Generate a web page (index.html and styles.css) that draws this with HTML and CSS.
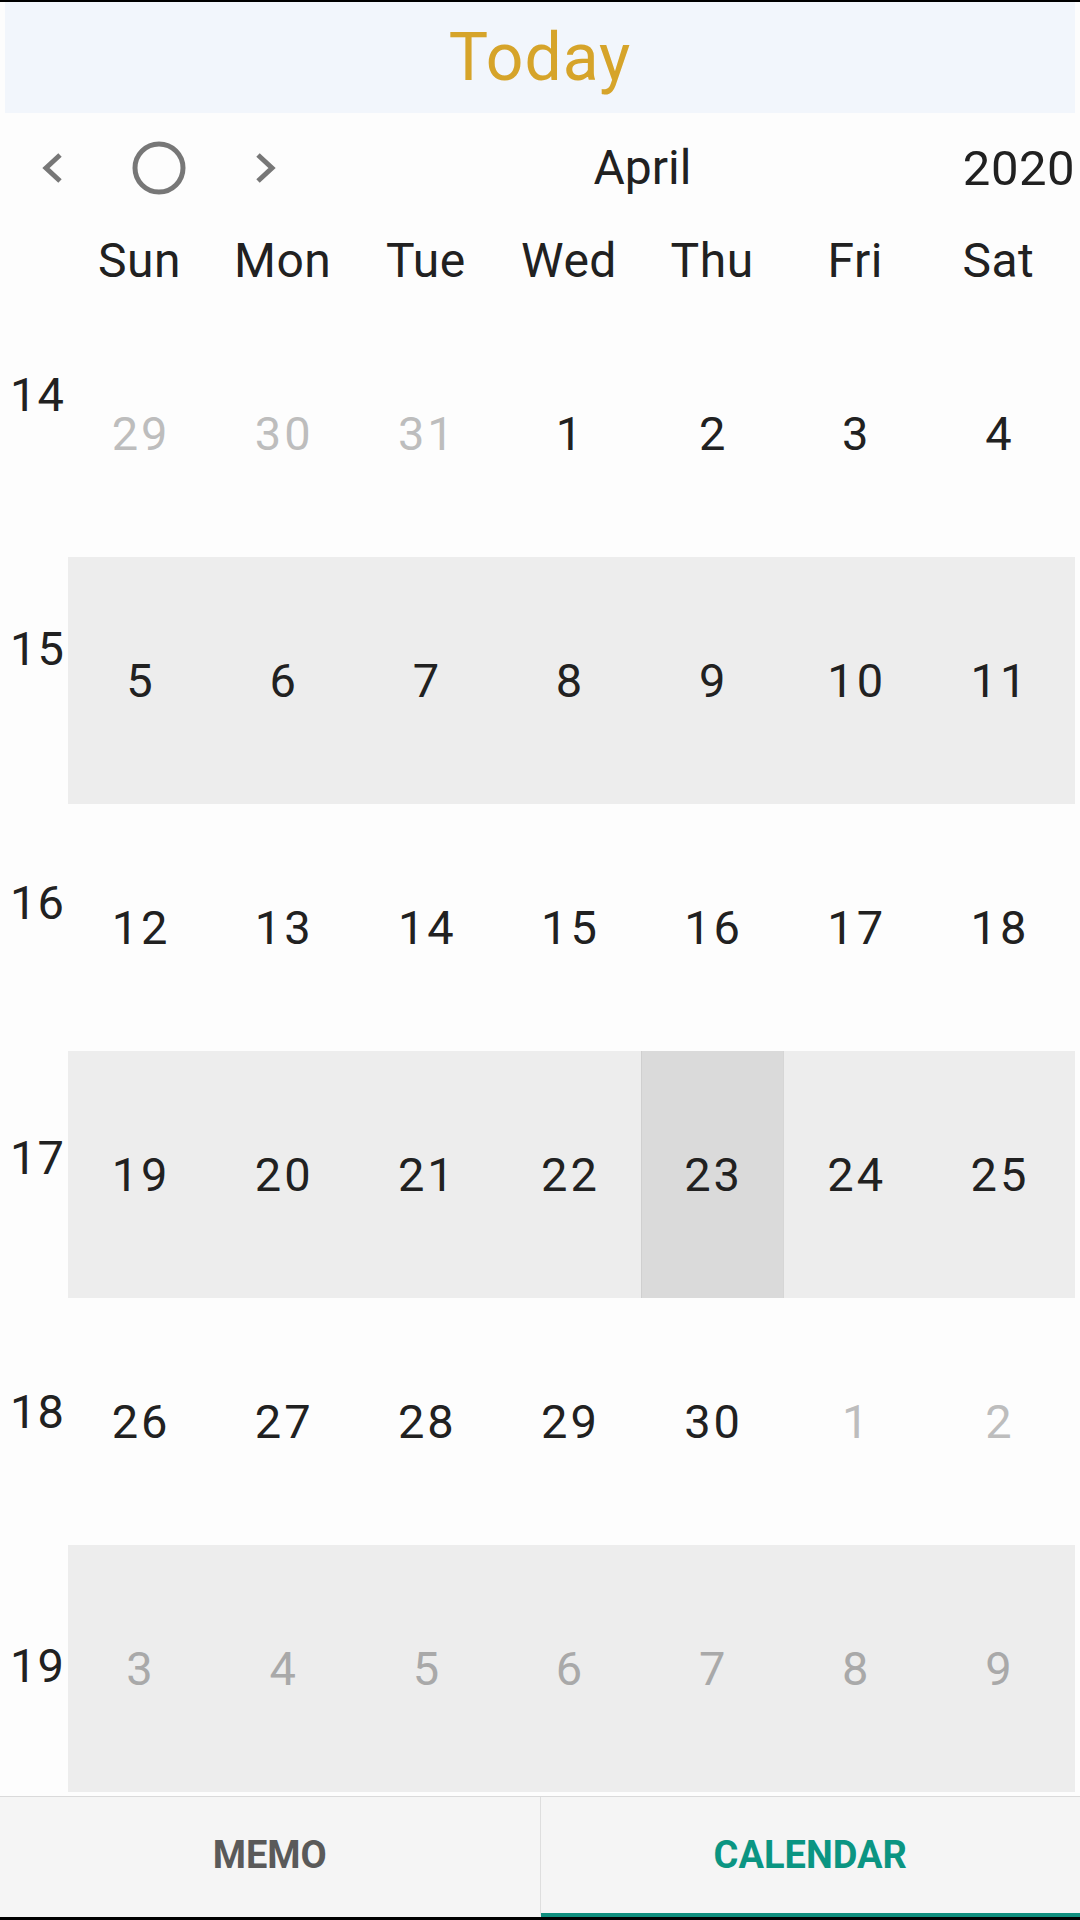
FILE: index.html
```html
<!DOCTYPE html>
<html lang="en">
<head>
<meta charset="utf-8">
<title>Calendar</title>
<link rel="stylesheet" href="styles.css">
</head>
<body>
<div class="screen">
  <header class="title-bar"><h1 class="title">Today</h1></header>
  <div class="nav">
    <div class="nav-icons">
      <svg class="chev" width="24" height="32" viewBox="0 0 24 32"><path d="M19 3 L5 16 L19 29" fill="none" stroke="#777" stroke-width="5"/></svg>
      <svg class="ring" width="56" height="56" viewBox="0 0 56 56"><circle cx="28" cy="28" r="24" fill="none" stroke="#777" stroke-width="5"/></svg>
      <svg class="chev" width="24" height="32" viewBox="0 0 24 32"><path d="M5 3 L19 16 L5 29" fill="none" stroke="#777" stroke-width="5"/></svg>
    </div>
    <div class="month">April</div>
    <div class="year">2020</div>
  </div>
  <div class="weekdays">
    <span class="wk-spacer"></span>
    <div class="wd-grid">
      <span class="wd">Sun</span><span class="wd">Mon</span><span class="wd">Tue</span><span class="wd">Wed</span><span class="wd">Thu</span><span class="wd">Fri</span><span class="wd">Sat</span>
    </div>
  </div>
  <div class="weeks">
    <div class="week-nums">
      <div class="week-num">14</div>
      <div class="week-num">15</div>
      <div class="week-num">16</div>
      <div class="week-num">17</div>
      <div class="week-num">18</div>
      <div class="week-num">19</div>
    </div>
    <div class="rows">
      <div class="week">
        <div class="day other">29</div><div class="day other">30</div><div class="day other">31</div><div class="day">1</div><div class="day">2</div><div class="day">3</div><div class="day">4</div>
      </div>
      <div class="week shaded">
        <div class="day">5</div><div class="day">6</div><div class="day">7</div><div class="day">8</div><div class="day">9</div><div class="day">10</div><div class="day">11</div>
      </div>
      <div class="week">
        <div class="day">12</div><div class="day">13</div><div class="day">14</div><div class="day">15</div><div class="day">16</div><div class="day">17</div><div class="day">18</div>
      </div>
      <div class="week shaded">
        <div class="day">19</div><div class="day">20</div><div class="day">21</div><div class="day">22</div><div class="day today">23</div><div class="day">24</div><div class="day">25</div>
      </div>
      <div class="week">
        <div class="day">26</div><div class="day">27</div><div class="day">28</div><div class="day">29</div><div class="day">30</div><div class="day other">1</div><div class="day other">2</div>
      </div>
      <div class="week shaded">
        <div class="day other">3</div><div class="day other">4</div><div class="day other">5</div><div class="day other">6</div><div class="day other">7</div><div class="day other">8</div><div class="day other">9</div>
      </div>
    </div>
  </div>
  <nav class="tabs">
    <div class="tab">MEMO</div>
    <div class="tab active">CALENDAR</div>
  </nav>
  <div class="bottom-edge"></div>
</div>
</body>
</html>
```

FILE: styles.css
```css
* { box-sizing: border-box; }
html, body { margin: 0; padding: 0; }
body {
  background: #fdfdfd;
  font-family: Roboto, "Noto Sans", "Liberation Sans", sans-serif;
  color: #212121;
}
.screen {
  width: 1080px;
  height: 1920px;
  display: flex;
  flex-direction: column;
  border-top: 2px solid #000;
  overflow: hidden;
}
.title-bar {
  height: 111px;
  margin: 0 5px;
  background: #f2f6fc;
  display: flex;
  align-items: center;
  justify-content: center;
  flex-shrink: 0;
}
.title {
  margin: 0;
  font-size: 66px;
  font-weight: 400;
  color: #d6a42a;
  line-height: 1;
  letter-spacing: 1px;
}
.nav {
  height: 110px;
  display: flex;
  align-items: center;
  padding-right: 5px;
  flex-shrink: 0;
}
.nav-icons {
  width: 300px;
  display: flex;
  align-items: center;
  gap: 66px;
  padding-left: 41px;
}
.chev, .ring { display: block; flex-shrink: 0; }
.month {
  flex: 1;
  text-align: center;
  padding-left: 22px;
  font-size: 48px;
  line-height: 1;
}
.year {
  font-size: 49px;
  line-height: 1;
  letter-spacing: 0.5px;
}
.weekdays {
  height: 87px;
  display: flex;
  align-items: center;
  padding: 0 10px 12px 0;
  flex-shrink: 0;
}
.wk-spacer { width: 68px; flex-shrink: 0; }
.wd-grid {
  flex: 1;
  display: grid;
  grid-template-columns: repeat(7, 1fr);
}
.wd {
  text-align: center;
  font-size: 48px;
  line-height: 1;
  letter-spacing: 0.5px;
}
.weeks {
  display: flex;
  padding-right: 5px;
  flex-shrink: 0;
}
.week-nums {
  width: 68px;
  flex-shrink: 0;
  display: flex;
  flex-direction: column;
  gap: 202.2px;
  padding: 59px 0 0 10px;
}
.week-num {
  font-size: 47px;
  line-height: 52px;
  letter-spacing: 1px;
}
.rows {
  flex: 1;
  display: flex;
  flex-direction: column;
}
.week {
  height: 247px;
  display: grid;
  grid-template-columns: repeat(7, 1fr);
  padding-right: 5px;
}
.week.shaded { background: #ededed; }
.day {
  display: flex;
  align-items: center;
  justify-content: center;
  font-size: 47px;
  line-height: 1;
  letter-spacing: 3px;
  padding-left: 3px;
}
.day.other { color: #bdbdbd; }
.shaded .day.other { color: #a9a9a9; }
.day.today {
  background: #dadada;
  border-left: 1px solid #cfcfcf;
  border-right: 1px solid #d6d6d6;
}
.tabs {
  margin-top: auto;
  height: 121px;
  display: flex;
  background: #f5f5f5;
  border-top: 1px solid #dadada;
  flex-shrink: 0;
}
.tab {
  flex: 1;
  display: flex;
  align-items: center;
  justify-content: center;
  font-size: 38px;
  font-weight: 700;
  color: #5a5a5a;
  border-bottom: 4px solid transparent;
}
.tab:first-child { border-right: 1px solid #dedede; }
.tab.active {
  color: #0b9582;
  border-bottom-color: #0f8f7e;
}
.bottom-edge {
  height: 3px;
  background: #000;
  flex-shrink: 0;
}
```
